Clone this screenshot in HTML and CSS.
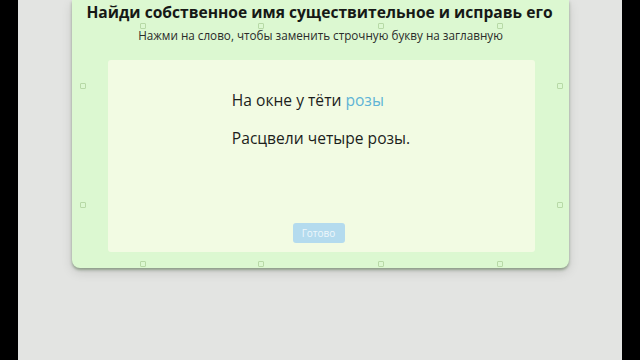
FILE: index.html
```html
<!DOCTYPE html>
<html lang="ru">
<head>
    <meta charset="UTF-8">
    <meta name="viewport" content="width=device-width, initial-scale=1.0">
    <title>Имена собственные</title>
    <link rel="stylesheet" href="styles.css">
</head>
<body>
    <div class="screen">
        <div class="card">
            <h1 class="title">Найди собственное имя существительное и исправь его</h1>
            <p class="subtitle">Нажми на слово, чтобы заменить строчную букву на заглавную</p>

            <div class="panel">
                <div class="sentences">
                    <p class="sentence">На окне у тёти <span class="word picked">розы</span></p>
                    <p class="sentence">Расцвели четыре розы.</p>
                </div>
                <button type="button" class="done-btn" disabled>Готово</button>
            </div>

            <!-- resize handles -->
            <span class="handle" style="left: 68px; top: 23px;"></span>
            <span class="handle" style="left: 186px; top: 23px;"></span>
            <span class="handle" style="left: 306px; top: 23px;"></span>
            <span class="handle" style="left: 425px; top: 23px;"></span>
            <span class="handle" style="left: 8px; top: 83px;"></span>
            <span class="handle" style="left: 8px; top: 202px;"></span>
            <span class="handle" style="left: 485px; top: 83px;"></span>
            <span class="handle" style="left: 485px; top: 202px;"></span>
            <span class="handle" style="left: 68px; top: 261px;"></span>
            <span class="handle" style="left: 186px; top: 261px;"></span>
            <span class="handle" style="left: 306px; top: 261px;"></span>
            <span class="handle" style="left: 425px; top: 261px;"></span>
        </div>
    </div>
</body>
</html>
```

FILE: styles.css
```css
* {
    margin: 0;
    padding: 0;
    box-sizing: border-box;
}

body {
    font-family: 'Open Sans', 'Noto Sans', sans-serif;
    background: #000;
    width: 640px;
    height: 360px;
    overflow: hidden;
}

.screen {
    margin-left: 18px;
    width: 604px;
    height: 360px;
    background: #e3e4e2;
    overflow: hidden;
}

.card {
    position: relative;
    margin-left: 54px;
    width: 497px;
    height: 268px;
    background: #dcf8d1;
    border-radius: 0 0 8px 8px;
    box-shadow: 0 2px 3px rgba(60, 90, 50, 0.45), 0 4px 12px rgba(0,0,0,0.12);
    padding-top: 1px;
}

.title {
    font-size: 15.6px;
    font-weight: 700;
    color: #161816;
    text-align: center;
    white-space: nowrap;
    line-height: 22px;
    margin-right: 2px;
}

.subtitle {
    font-size: 11.7px;
    color: #2a2c2a;
    text-align: center;
    white-space: nowrap;
    line-height: 16px;
    margin-top: 4px;
}

.panel {
    display: flex;
    flex-direction: column;
    align-items: center;
    margin: 17px 34px 0 36px;
    height: 192px;
    background: #f2fbe3;
    border-radius: 3px;
    padding-top: 29px;
}

.sentences {
    display: flex;
    flex-direction: column;
    gap: 16px;
    margin-right: 1px;
}

.sentence {
    font-size: 15.6px;
    line-height: 22px;
    color: #1c1e1c;
}

.word.picked {
    color: #5fb4d6;
}

.done-btn {
    margin-top: auto;
    margin-bottom: 9px;
    margin-right: 6px;
    width: 52px;
    height: 20px;
    border: none;
    border-radius: 3px;
    background: #b4dbee;
    color: #eef7fb;
    font-family: 'Open Sans', 'Noto Sans', sans-serif;
    font-size: 10px;
}

.handle {
    position: absolute;
    width: 6px;
    height: 6px;
    border: 1.5px solid #b7d9a6;
    border-radius: 1px;
}
```
